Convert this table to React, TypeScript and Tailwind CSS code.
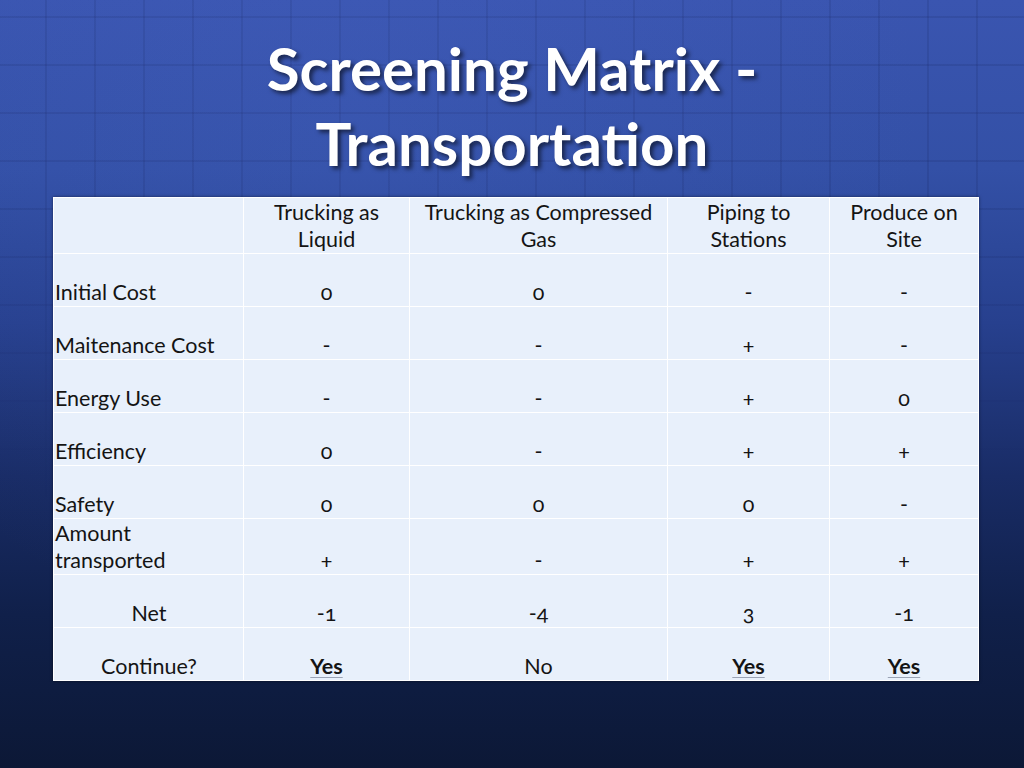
const COLS = ['Trucking as Liquid', 'Trucking as Compressed Gas', 'Piping to Stations', 'Produce on Site']

const ROWS: { label: string; values: string[]; center?: boolean; tall?: boolean; bold?: boolean[] }[] = [
  { label: 'Initial Cost', values: ['0', '0', '-', '-'] },
  { label: 'Maitenance Cost', values: ['-', '-', '+', '-'] },
  { label: 'Energy Use', values: ['-', '-', '+', '0'] },
  { label: 'Efficiency', values: ['0', '-', '+', '+'] },
  { label: 'Safety', values: ['0', '0', '0', '-'] },
  { label: 'Amount transported', values: ['+', '-', '+', '+'], tall: true },
  { label: 'Net', values: ['-1', '-4', '3', '-1'], center: true },
  { label: 'Continue?', values: ['Yes', 'No', 'Yes', 'Yes'], center: true, bold: [true, false, true, true] },
]

const WIDTHS = ['w-[190px]', 'w-[166px]', 'w-[258px]', 'w-[162px]', 'w-[149px]']

export default function App() {
  return (
    <div className="relative h-[768px] w-[1024px] overflow-hidden bg-[linear-gradient(180deg,#3a55b0_0%,#3350a6_22%,#27408e_42%,#192c66_62%,#10204a_80%,#0c1836_100%)] font-['Lato','Open_Sans',sans-serif] [font-variant-numeric:oldstyle-nums]">
      {/* faint grid pattern, fades out lower down */}
      <div className="pointer-events-none absolute inset-0 bg-[linear-gradient(rgba(18,28,80,0.13)_2px,transparent_2px),linear-gradient(90deg,rgba(18,28,80,0.13)_2px,transparent_2px)] bg-[size:49px_48px] bg-[position:45px_16px] [mask-image:linear-gradient(180deg,black_0%,black_30%,transparent_65%)]" />
      <div className="pointer-events-none absolute inset-0 bg-[radial-gradient(ellipse_at_35%_15%,rgba(80,110,210,0.15),transparent_60%)]" />

      <div className="relative flex flex-col items-center">
        <h1 className="mt-[31px] text-center text-[60px] font-bold leading-[75px] text-white [text-shadow:3px_3px_4px_rgba(0,0,0,0.55)]">
          Screening Matrix -<br />
          Transportation
        </h1>
      </div>

      <div className="relative ml-[53px] mt-[16px] w-fit shadow-[0_0_3px_rgba(0,0,0,0.5)]">
        <table className="table-fixed border-collapse text-[21.5px] leading-[27px] text-[#141414]">
          <colgroup>
            {WIDTHS.map((w, i) => (
              <col key={i} className={w} />
            ))}
          </colgroup>
          <tbody>
            <tr className="h-[56px]">
              <td className="border border-white bg-[#e8f0fb]" />
              {COLS.map((c) => (
                <td key={c} className="border border-white bg-[#e8f0fb] px-1 text-center align-bottom">
                  {c}
                </td>
              ))}
            </tr>
            {ROWS.map((r) => (
              <tr key={r.label} className={r.tall ? 'h-[56px]' : 'h-[53px]'}>
                <td
                  className={`border border-white bg-[#e8f0fb] pl-[1px] align-bottom ${r.center ? 'text-center' : 'text-left'}`}
                >
                  {r.tall ? (
                    <>
                      Amount
                      <br />
                      transported
                    </>
                  ) : (
                    r.label
                  )}
                </td>
                {r.values.map((v, i) => (
                  <td key={i} className="border border-white bg-[#e8f0fb] text-center align-bottom">
                    {r.bold?.[i] ? (
                      <span className="font-bold underline decoration-[#9aa3b5] decoration-1 underline-offset-[3px]">{v}</span>
                    ) : (
                      v
                    )}
                  </td>
                ))}
              </tr>
            ))}
          </tbody>
        </table>
      </div>
    </div>
  )
}
